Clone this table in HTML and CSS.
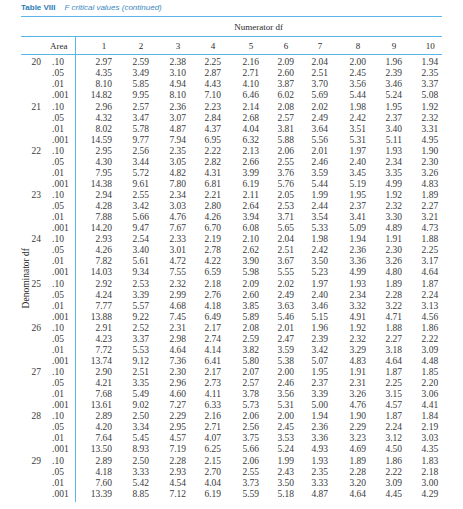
FILE: index.html
```html
<!DOCTYPE html>
<html>
<head>
<meta charset="utf-8">
<link rel="stylesheet" href="styles.css">
</head>
<body>
<div class="page">
  <div class="title"><b>Table VIII</b><i>F critical values (continued)</i></div>
  <table class="ft">
    <colgroup>
      <col class="c-den"><col class="c-g"><col class="c-a">
      <col class="c1"><col class="c2"><col class="c3"><col class="c4"><col class="c5">
      <col class="c6"><col class="c7"><col class="c8"><col class="c9"><col class="c10">
    </colgroup>
    <thead>
      <tr class="num"><th colspan="3"></th><th colspan="10">Numerator df</th></tr>
      <tr class="hdr"><th colspan="2"></th><th class="area">Area</th><th><span>1</span></th><th><span>2</span></th><th><span>3</span></th><th><span>4</span></th><th><span>5</span></th><th><span>6</span></th><th><span>7</span></th><th><span>8</span></th><th><span>9</span></th><th><span>10</span></th></tr>
    </thead>
    <tbody>
      <tr class="first"><td class="den" rowspan="40"><span>Denominator df</span></td><td class="g">20</td><td class="a">.10</td><td>2.97</td><td>2.59</td><td>2.38</td><td>2.25</td><td>2.16</td><td>2.09</td><td>2.04</td><td>2.00</td><td>1.96</td><td>1.94</td></tr>
      <tr><td class="g"></td><td class="a">.05</td><td>4.35</td><td>3.49</td><td>3.10</td><td>2.87</td><td>2.71</td><td>2.60</td><td>2.51</td><td>2.45</td><td>2.39</td><td>2.35</td></tr>
      <tr><td class="g"></td><td class="a">.01</td><td>8.10</td><td>5.85</td><td>4.94</td><td>4.43</td><td>4.10</td><td>3.87</td><td>3.70</td><td>3.56</td><td>3.46</td><td>3.37</td></tr>
      <tr><td class="g"></td><td class="a">.001</td><td>14.82</td><td>9.95</td><td>8.10</td><td>7.10</td><td>6.46</td><td>6.02</td><td>5.69</td><td>5.44</td><td>5.24</td><td>5.08</td></tr>

      <tr><td class="g">21</td><td class="a">.10</td><td>2.96</td><td>2.57</td><td>2.36</td><td>2.23</td><td>2.14</td><td>2.08</td><td>2.02</td><td>1.98</td><td>1.95</td><td>1.92</td></tr>
      <tr><td class="g"></td><td class="a">.05</td><td>4.32</td><td>3.47</td><td>3.07</td><td>2.84</td><td>2.68</td><td>2.57</td><td>2.49</td><td>2.42</td><td>2.37</td><td>2.32</td></tr>
      <tr><td class="g"></td><td class="a">.01</td><td>8.02</td><td>5.78</td><td>4.87</td><td>4.37</td><td>4.04</td><td>3.81</td><td>3.64</td><td>3.51</td><td>3.40</td><td>3.31</td></tr>
      <tr><td class="g"></td><td class="a">.001</td><td>14.59</td><td>9.77</td><td>7.94</td><td>6.95</td><td>6.32</td><td>5.88</td><td>5.56</td><td>5.31</td><td>5.11</td><td>4.95</td></tr>

      <tr><td class="g">22</td><td class="a">.10</td><td>2.95</td><td>2.56</td><td>2.35</td><td>2.22</td><td>2.13</td><td>2.06</td><td>2.01</td><td>1.97</td><td>1.93</td><td>1.90</td></tr>
      <tr><td class="g"></td><td class="a">.05</td><td>4.30</td><td>3.44</td><td>3.05</td><td>2.82</td><td>2.66</td><td>2.55</td><td>2.46</td><td>2.40</td><td>2.34</td><td>2.30</td></tr>
      <tr><td class="g"></td><td class="a">.01</td><td>7.95</td><td>5.72</td><td>4.82</td><td>4.31</td><td>3.99</td><td>3.76</td><td>3.59</td><td>3.45</td><td>3.35</td><td>3.26</td></tr>
      <tr><td class="g"></td><td class="a">.001</td><td>14.38</td><td>9.61</td><td>7.80</td><td>6.81</td><td>6.19</td><td>5.76</td><td>5.44</td><td>5.19</td><td>4.99</td><td>4.83</td></tr>

      <tr><td class="g">23</td><td class="a">.10</td><td>2.94</td><td>2.55</td><td>2.34</td><td>2.21</td><td>2.11</td><td>2.05</td><td>1.99</td><td>1.95</td><td>1.92</td><td>1.89</td></tr>
      <tr><td class="g"></td><td class="a">.05</td><td>4.28</td><td>3.42</td><td>3.03</td><td>2.80</td><td>2.64</td><td>2.53</td><td>2.44</td><td>2.37</td><td>2.32</td><td>2.27</td></tr>
      <tr><td class="g"></td><td class="a">.01</td><td>7.88</td><td>5.66</td><td>4.76</td><td>4.26</td><td>3.94</td><td>3.71</td><td>3.54</td><td>3.41</td><td>3.30</td><td>3.21</td></tr>
      <tr><td class="g"></td><td class="a">.001</td><td>14.20</td><td>9.47</td><td>7.67</td><td>6.70</td><td>6.08</td><td>5.65</td><td>5.33</td><td>5.09</td><td>4.89</td><td>4.73</td></tr>

      <tr><td class="g">24</td><td class="a">.10</td><td>2.93</td><td>2.54</td><td>2.33</td><td>2.19</td><td>2.10</td><td>2.04</td><td>1.98</td><td>1.94</td><td>1.91</td><td>1.88</td></tr>
      <tr><td class="g"></td><td class="a">.05</td><td>4.26</td><td>3.40</td><td>3.01</td><td>2.78</td><td>2.62</td><td>2.51</td><td>2.42</td><td>2.36</td><td>2.30</td><td>2.25</td></tr>
      <tr><td class="g"></td><td class="a">.01</td><td>7.82</td><td>5.61</td><td>4.72</td><td>4.22</td><td>3.90</td><td>3.67</td><td>3.50</td><td>3.36</td><td>3.26</td><td>3.17</td></tr>
      <tr><td class="g"></td><td class="a">.001</td><td>14.03</td><td>9.34</td><td>7.55</td><td>6.59</td><td>5.98</td><td>5.55</td><td>5.23</td><td>4.99</td><td>4.80</td><td>4.64</td></tr>

      <tr><td class="g">25</td><td class="a">.10</td><td>2.92</td><td>2.53</td><td>2.32</td><td>2.18</td><td>2.09</td><td>2.02</td><td>1.97</td><td>1.93</td><td>1.89</td><td>1.87</td></tr>
      <tr><td class="g"></td><td class="a">.05</td><td>4.24</td><td>3.39</td><td>2.99</td><td>2.76</td><td>2.60</td><td>2.49</td><td>2.40</td><td>2.34</td><td>2.28</td><td>2.24</td></tr>
      <tr><td class="g"></td><td class="a">.01</td><td>7.77</td><td>5.57</td><td>4.68</td><td>4.18</td><td>3.85</td><td>3.63</td><td>3.46</td><td>3.32</td><td>3.22</td><td>3.13</td></tr>
      <tr><td class="g"></td><td class="a">.001</td><td>13.88</td><td>9.22</td><td>7.45</td><td>6.49</td><td>5.89</td><td>5.46</td><td>5.15</td><td>4.91</td><td>4.71</td><td>4.56</td></tr>

      <tr><td class="g">26</td><td class="a">.10</td><td>2.91</td><td>2.52</td><td>2.31</td><td>2.17</td><td>2.08</td><td>2.01</td><td>1.96</td><td>1.92</td><td>1.88</td><td>1.86</td></tr>
      <tr><td class="g"></td><td class="a">.05</td><td>4.23</td><td>3.37</td><td>2.98</td><td>2.74</td><td>2.59</td><td>2.47</td><td>2.39</td><td>2.32</td><td>2.27</td><td>2.22</td></tr>
      <tr><td class="g"></td><td class="a">.01</td><td>7.72</td><td>5.53</td><td>4.64</td><td>4.14</td><td>3.82</td><td>3.59</td><td>3.42</td><td>3.29</td><td>3.18</td><td>3.09</td></tr>
      <tr><td class="g"></td><td class="a">.001</td><td>13.74</td><td>9.12</td><td>7.36</td><td>6.41</td><td>5.80</td><td>5.38</td><td>5.07</td><td>4.83</td><td>4.64</td><td>4.48</td></tr>

      <tr><td class="g">27</td><td class="a">.10</td><td>2.90</td><td>2.51</td><td>2.30</td><td>2.17</td><td>2.07</td><td>2.00</td><td>1.95</td><td>1.91</td><td>1.87</td><td>1.85</td></tr>
      <tr><td class="g"></td><td class="a">.05</td><td>4.21</td><td>3.35</td><td>2.96</td><td>2.73</td><td>2.57</td><td>2.46</td><td>2.37</td><td>2.31</td><td>2.25</td><td>2.20</td></tr>
      <tr><td class="g"></td><td class="a">.01</td><td>7.68</td><td>5.49</td><td>4.60</td><td>4.11</td><td>3.78</td><td>3.56</td><td>3.39</td><td>3.26</td><td>3.15</td><td>3.06</td></tr>
      <tr><td class="g"></td><td class="a">.001</td><td>13.61</td><td>9.02</td><td>7.27</td><td>6.33</td><td>5.73</td><td>5.31</td><td>5.00</td><td>4.76</td><td>4.57</td><td>4.41</td></tr>

      <tr><td class="g">28</td><td class="a">.10</td><td>2.89</td><td>2.50</td><td>2.29</td><td>2.16</td><td>2.06</td><td>2.00</td><td>1.94</td><td>1.90</td><td>1.87</td><td>1.84</td></tr>
      <tr><td class="g"></td><td class="a">.05</td><td>4.20</td><td>3.34</td><td>2.95</td><td>2.71</td><td>2.56</td><td>2.45</td><td>2.36</td><td>2.29</td><td>2.24</td><td>2.19</td></tr>
      <tr><td class="g"></td><td class="a">.01</td><td>7.64</td><td>5.45</td><td>4.57</td><td>4.07</td><td>3.75</td><td>3.53</td><td>3.36</td><td>3.23</td><td>3.12</td><td>3.03</td></tr>
      <tr><td class="g"></td><td class="a">.001</td><td>13.50</td><td>8.93</td><td>7.19</td><td>6.25</td><td>5.66</td><td>5.24</td><td>4.93</td><td>4.69</td><td>4.50</td><td>4.35</td></tr>

      <tr><td class="g">29</td><td class="a">.10</td><td>2.89</td><td>2.50</td><td>2.28</td><td>2.15</td><td>2.06</td><td>1.99</td><td>1.93</td><td>1.89</td><td>1.86</td><td>1.83</td></tr>
      <tr><td class="g"></td><td class="a">.05</td><td>4.18</td><td>3.33</td><td>2.93</td><td>2.70</td><td>2.55</td><td>2.43</td><td>2.35</td><td>2.28</td><td>2.22</td><td>2.18</td></tr>
      <tr><td class="g"></td><td class="a">.01</td><td>7.60</td><td>5.42</td><td>4.54</td><td>4.04</td><td>3.73</td><td>3.50</td><td>3.33</td><td>3.20</td><td>3.09</td><td>3.00</td></tr>
      <tr class="last"><td class="g"></td><td class="a">.001</td><td>13.39</td><td>8.85</td><td>7.12</td><td>6.19</td><td>5.59</td><td>5.18</td><td>4.87</td><td>4.64</td><td>4.45</td><td>4.29</td></tr>
    </tbody>
  </table>
</div>
</body>
</html>
```

FILE: styles.css
```css
html, body {
  margin: 0;
  padding: 0;
  background: #ffffff;
}

body {
  font-family: "Liberation Serif", "Times New Roman", serif;
  color: #3a3a3a;
}

.page {
  padding: 3px 0 0 21px;
  width: 421px;
}

.title {
  font-family: "Liberation Sans", Arial, sans-serif;
  font-size: 8px;
  line-height: 10px;
  color: #2c7db6;
  margin: 0 0 3px 0;
  white-space: nowrap;
}

.title b {
  font-weight: bold;
  margin-right: 9px;
}

.title i {
  font-style: italic;
  color: #3a89c2;
}

.ft {
  border-collapse: collapse;
  table-layout: fixed;
  width: 421px;
  font-size: 9.5px;
  border-top: 1px solid #5ab6e6;
}

.c-den { width: 10px; }
.c-g { width: 13px; }
.c-a { width: 31px; }
.c1 { width: 41px; }
.c2 { width: 37px; }
.c3 { width: 37px; }
.c4 { width: 35px; }
.c5 { width: 38px; }
.c6 { width: 35px; }
.c7 { width: 34px; }
.c8 { width: 38px; }
.c9 { width: 36px; }
.c10 { width: 36px; }

.ft th,
.ft td {
  padding: 0;
  font-weight: normal;
}

.ft thead th {
  font-size: 9px;
  vertical-align: middle;
  color: #2a2a2a;
}

.ft .num th {
  height: 19px;
  text-align: center;
  border-bottom: 1px solid #5ab6e6;
}

.ft .hdr th {
  height: 17px;
  text-align: right;
  padding-right: 4px;
  border-bottom: 1px solid #5ab6e6;
}

.ft .hdr th span {
  display: inline-block;
  width: 16px;
  text-align: center;
}

.ft .hdr th.area {
  text-align: left;
  padding: 0 0 0 6px;
  border-right: 1px solid #5ab6e6;
}

.ft tbody td {
  line-height: 11.07px;
  text-align: right;
  padding-right: 4px;
  vertical-align: middle;
  white-space: nowrap;
}

.ft tbody td.g {
  padding-right: 3px;
}

.ft tbody td.a {
  text-align: left;
  padding: 0 0 0 8px;
  border-right: 1px solid #5ab6e6;
}

.ft tbody tr.first td {
  padding-top: 2.3px;
}

.ft tbody tr.last td {
  padding-bottom: 2.5px;
}

.ft tbody td.den {
  padding: 0;
  text-align: center;
  vertical-align: middle;
}

.den span {
  display: inline-block;
  writing-mode: vertical-rl;
  transform: rotate(180deg);
  font-size: 9.5px;
  line-height: 10px;
  white-space: nowrap;
  color: #2a2a2a;
}
```
